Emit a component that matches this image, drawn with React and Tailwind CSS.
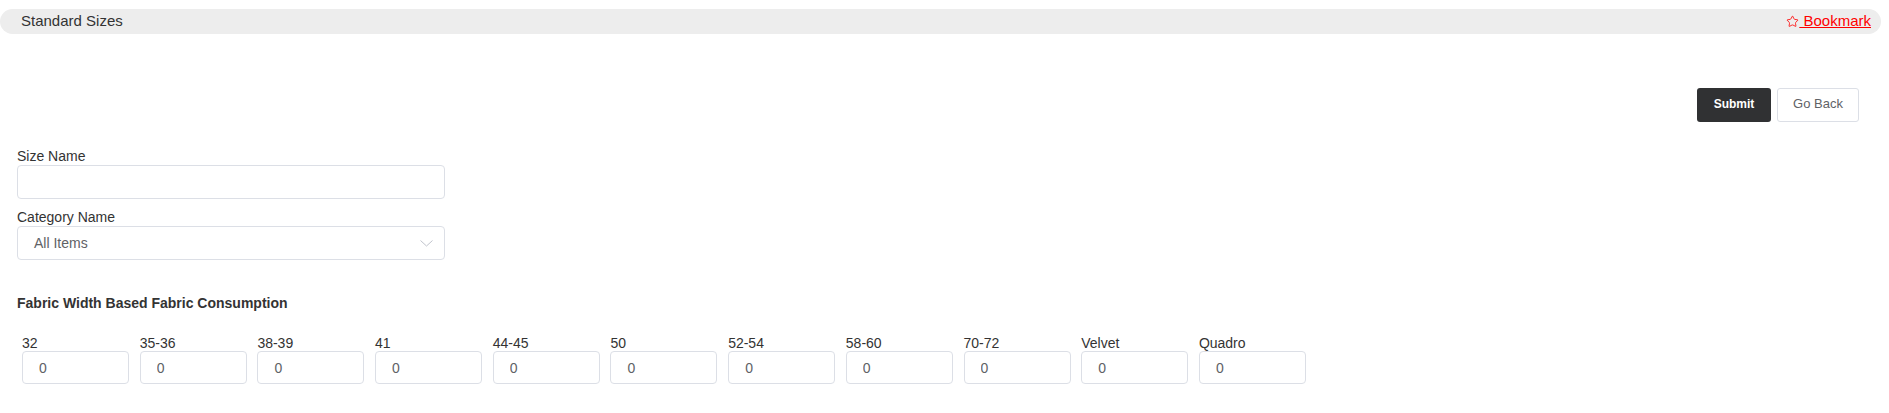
import { Star } from "lucide-react";

const widths = ["32", "35-36", "38-39", "41", "44-45", "50", "52-54", "58-60", "70-72", "Velvet", "Quadro"];

const FieldLabel = ({ children, className = "" }) => (
  <label className={`block text-[14px] leading-[17px] text-[#333] ${className}`}>{children}</label>
);

export default function App() {
  return (
    <div className="min-h-[413px] w-full bg-white pt-[9px] font-['Liberation_Sans',Arial,sans-serif]">
      {/* page title bar */}
      <div className="mr-[8px] flex h-[25px] items-center justify-between rounded-full bg-[#ededed] pl-[21px] pr-[10px]">
        <span className="text-[15px] text-[#333]">Standard Sizes</span>
        <a href="#" className="flex items-center text-[15px] text-[#ff0000] underline">
          <Star size={13} strokeWidth={1.5} />
          <span className="whitespace-pre"> Bookmark</span>
        </a>
      </div>

      {/* actions */}
      <div className="mt-[54px] flex justify-end gap-[6px] pr-[30px]">
        <button className="h-[34px] w-[74px] rounded-[3px] bg-[#303133] pb-[2px] text-[12px] font-bold text-white">
          Submit
        </button>
        <button className="h-[34px] w-[82px] rounded-[3px] border border-[#dcdfe6] bg-white pb-[2px] text-[13px] text-[#606266]">
          Go Back
        </button>
      </div>

      <div className="pl-[17px]">
        <FieldLabel className="mt-[26px]">Size Name</FieldLabel>
        <input
          className="block h-[34px] w-[428px] rounded-[4px] border border-[#dcdfe6] bg-white px-[16px] text-[14px] text-[#606266] outline-none"
        />

        <FieldLabel className="mt-[10px]">Category Name</FieldLabel>
        <div className="flex h-[34px] w-[428px] items-center justify-between rounded-[4px] border border-[#dcdfe6] bg-white pl-[16px] pr-[11px]">
          <span className="text-[14px] text-[#606266]">All Items</span>
          <svg width="13" height="7" viewBox="0 0 13 7" fill="none" stroke="#c0c4cc" strokeWidth="1">
            <path d="M0.5 0.5 L6.5 6 L12.5 0.5" />
          </svg>
        </div>

        <h3 className="mt-[35px] text-[14px] font-bold leading-[17px] text-[#333]">
          Fabric Width Based Fabric Consumption
        </h3>

        <div className="mt-[24px] flex gap-[10.7px] pl-[5px]">
          {widths.map((w) => (
            <div key={w} className="w-[107px]">
              <label className="block text-[14px] leading-[15px] text-[#333]">{w}</label>
              <input
                defaultValue="0"
                className="block h-[33px] w-[107px] rounded-[4px] border border-[#dcdfe6] bg-white pl-[16px] text-[14px] text-[#606266] outline-none"
              />
            </div>
          ))}
        </div>
      </div>
    </div>
  );
}
